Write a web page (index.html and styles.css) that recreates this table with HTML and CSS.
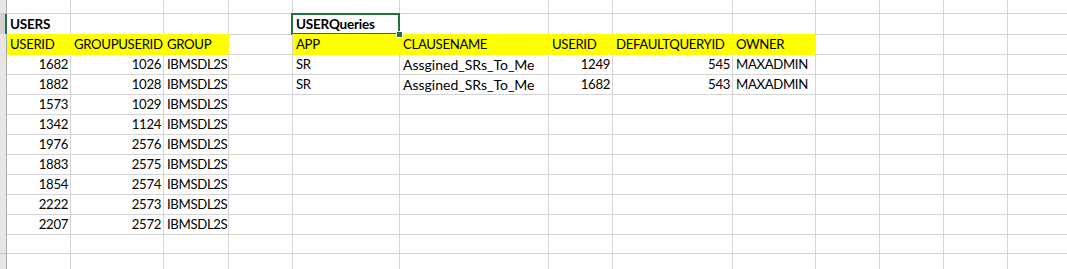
FILE: index.html
```
<!DOCTYPE html>
<html lang="en">
<head>
<meta charset="utf-8">
<title>Sheet</title>
<link rel="stylesheet" href="styles.css">
</head>
<body>
<div class="sheet">
  <div class="row short"><div class="rh"></div><div class="c"></div><div class="c"></div><div class="c"></div><div class="c"></div><div class="c"></div><div class="c"></div><div class="c"></div><div class="c"></div><div class="c"></div><div class="c"></div><div class="c"></div><div class="c"></div><div class="c"></div></div>
  <div class="row"><div class="rh active"></div><div class="c b">USERS</div><div class="c"></div><div class="c"></div><div class="c"></div><div class="c b sel">USERQueries</div><div class="c"></div><div class="c"></div><div class="c"></div><div class="c"></div><div class="c"></div><div class="c"></div><div class="c"></div><div class="c"></div></div>
  <div class="row"><div class="rh"></div><div class="c y">USERID</div><div class="c y">GROUPUSERID</div><div class="c y">GROUP</div><div class="c"></div><div class="c y">APP</div><div class="c y">CLAUSENAME</div><div class="c y">USERID</div><div class="c y">DEFAULTQUERYID</div><div class="c y">OWNER</div><div class="c"></div><div class="c"></div><div class="c"></div><div class="c"></div></div>
  <div class="row"><div class="rh"></div><div class="c n">1682</div><div class="c n">1026</div><div class="c">IBMSDL2S</div><div class="c"></div><div class="c">SR</div><div class="c lc">Assgined_SRs_To_Me</div><div class="c n">1249</div><div class="c n">545</div><div class="c">MAXADMIN</div><div class="c"></div><div class="c"></div><div class="c"></div><div class="c"></div></div>
  <div class="row"><div class="rh"></div><div class="c n">1882</div><div class="c n">1028</div><div class="c">IBMSDL2S</div><div class="c"></div><div class="c">SR</div><div class="c lc">Assgined_SRs_To_Me</div><div class="c n">1682</div><div class="c n">543</div><div class="c">MAXADMIN</div><div class="c"></div><div class="c"></div><div class="c"></div><div class="c"></div></div>
  <div class="row"><div class="rh"></div><div class="c n">1573</div><div class="c n">1029</div><div class="c">IBMSDL2S</div><div class="c"></div><div class="c"></div><div class="c"></div><div class="c"></div><div class="c"></div><div class="c"></div><div class="c"></div><div class="c"></div><div class="c"></div><div class="c"></div></div>
  <div class="row"><div class="rh"></div><div class="c n">1342</div><div class="c n">1124</div><div class="c">IBMSDL2S</div><div class="c"></div><div class="c"></div><div class="c"></div><div class="c"></div><div class="c"></div><div class="c"></div><div class="c"></div><div class="c"></div><div class="c"></div><div class="c"></div></div>
  <div class="row"><div class="rh"></div><div class="c n">1976</div><div class="c n">2576</div><div class="c">IBMSDL2S</div><div class="c"></div><div class="c"></div><div class="c"></div><div class="c"></div><div class="c"></div><div class="c"></div><div class="c"></div><div class="c"></div><div class="c"></div><div class="c"></div></div>
  <div class="row"><div class="rh"></div><div class="c n">1883</div><div class="c n">2575</div><div class="c">IBMSDL2S</div><div class="c"></div><div class="c"></div><div class="c"></div><div class="c"></div><div class="c"></div><div class="c"></div><div class="c"></div><div class="c"></div><div class="c"></div><div class="c"></div></div>
  <div class="row"><div class="rh"></div><div class="c n">1854</div><div class="c n">2574</div><div class="c">IBMSDL2S</div><div class="c"></div><div class="c"></div><div class="c"></div><div class="c"></div><div class="c"></div><div class="c"></div><div class="c"></div><div class="c"></div><div class="c"></div><div class="c"></div></div>
  <div class="row"><div class="rh"></div><div class="c n">2222</div><div class="c n">2573</div><div class="c">IBMSDL2S</div><div class="c"></div><div class="c"></div><div class="c"></div><div class="c"></div><div class="c"></div><div class="c"></div><div class="c"></div><div class="c"></div><div class="c"></div><div class="c"></div></div>
  <div class="row"><div class="rh"></div><div class="c n">2207</div><div class="c n">2572</div><div class="c">IBMSDL2S</div><div class="c"></div><div class="c"></div><div class="c"></div><div class="c"></div><div class="c"></div><div class="c"></div><div class="c"></div><div class="c"></div><div class="c"></div><div class="c"></div></div>
  <div class="row"><div class="rh"></div><div class="c"></div><div class="c"></div><div class="c"></div><div class="c"></div><div class="c"></div><div class="c"></div><div class="c"></div><div class="c"></div><div class="c"></div><div class="c"></div><div class="c"></div><div class="c"></div><div class="c"></div></div>
  <div class="row"><div class="rh"></div><div class="c"></div><div class="c"></div><div class="c"></div><div class="c"></div><div class="c"></div><div class="c"></div><div class="c"></div><div class="c"></div><div class="c"></div><div class="c"></div><div class="c"></div><div class="c"></div><div class="c"></div></div>
</div>
</body>
</html>
```

FILE: styles.css
```
html, body {
  margin: 0;
  padding: 0;
  background: #ffffff;
  overflow: hidden;
}

.sheet {
  width: 1067px;
  height: 269px;
  overflow: hidden;
  font-family: Lato, "Liberation Sans", sans-serif;
  font-size: 13.2px;
  letter-spacing: -0.35px;
  color: #000000;
}

.row {
  display: grid;
  grid-template-columns: 7px 64px 93px 65px 64px 107px 149px 64px 120px 83px 64px 64px 64px 64px;
  height: 20px;
}

.row.short {
  height: 14px;
}

.c {
  box-sizing: border-box;
  border-right: 1px solid #d4d4d4;
  border-bottom: 1px solid #d4d4d4;
  padding: 1px 2px 0 3px;
  line-height: 19px;
  white-space: nowrap;
  overflow: visible;
  position: relative;
}

.lc {
  font-size: 14px;
  letter-spacing: 0;
}

.rh {
  box-sizing: border-box;
  background: #e6e6e6;
  border-right: 1px solid #ababab;
  border-bottom: 1px solid #c6c6c6;
}

.rh.active {
  background: #d2d2d2;
  border-right: 2px solid #217346;
}

.b {
  font-size: 13.5px;
  font-weight: 700;
  letter-spacing: -0.2px;
}

.n {
  text-align: right;
  padding-right: 2px;
}

.y {
  background: #ffff00;
  border-right-color: #ffff00;
  border-bottom-color: #ffff00;
}

.sel::after {
  content: "";
  position: absolute;
  left: -2px;
  top: -1px;
  right: -1px;
  bottom: -1px;
  border: 2px solid #217346;
}

.sel::before {
  content: "";
  position: absolute;
  right: -4px;
  bottom: -4px;
  width: 5px;
  height: 5px;
  background: #217346;
  border: 1px solid #ffffff;
  z-index: 2;
}
```
